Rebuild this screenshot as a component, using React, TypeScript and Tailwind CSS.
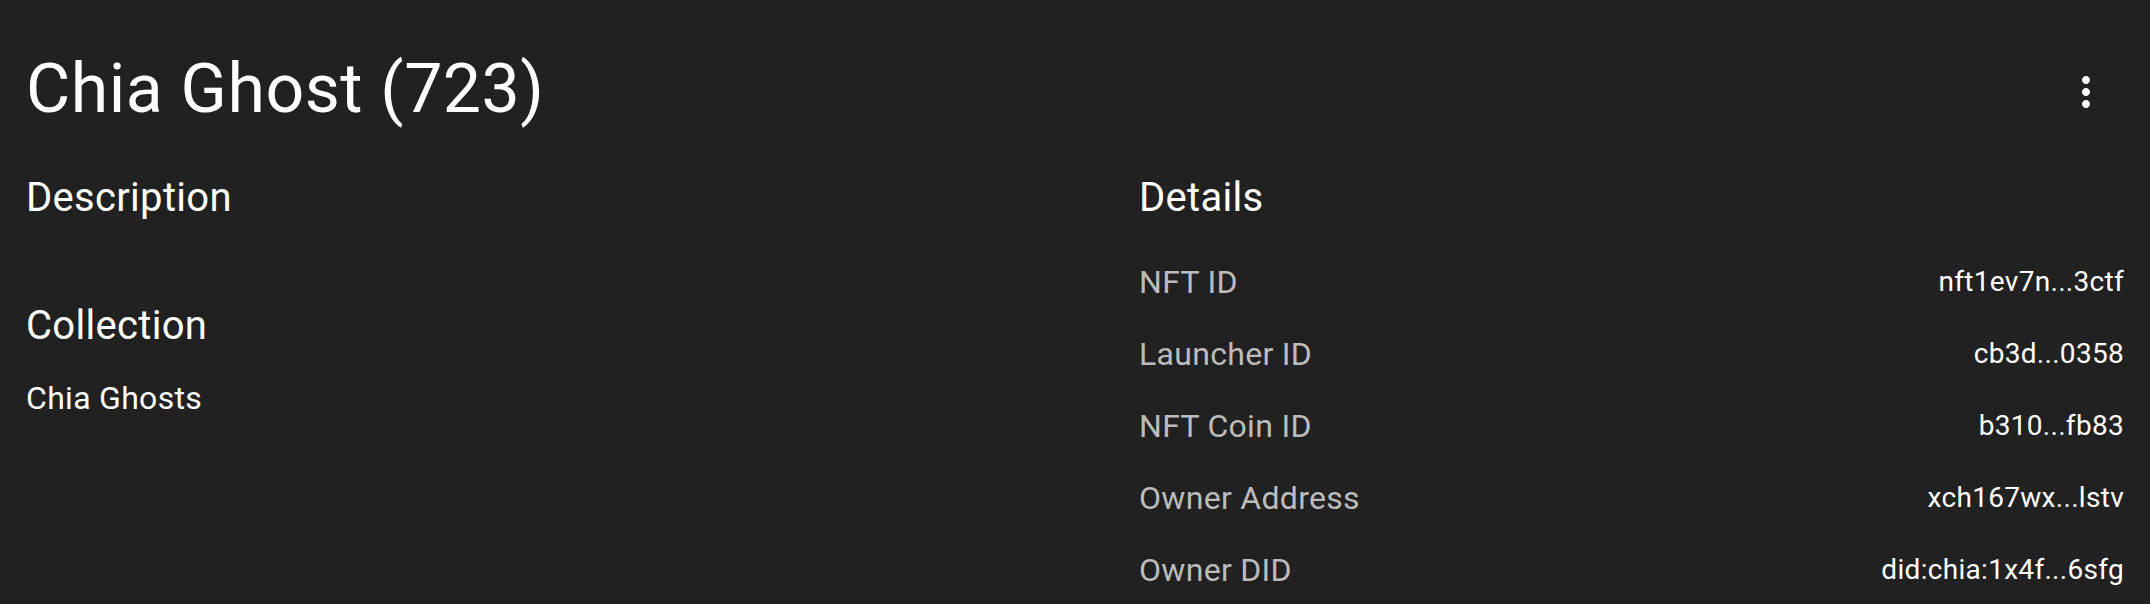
import React from 'react';

interface DetailRow {
  label: string;
  value: string;
}

const details: DetailRow[] = [
  { label: 'NFT ID', value: 'nft1ev7n...3ctf' },
  { label: 'Launcher ID', value: 'cb3d...0358' },
  { label: 'NFT Coin ID', value: 'b310...fb83' },
  { label: 'Owner Address', value: 'xch167wx...lstv' },
  { label: 'Owner DID', value: 'did:chia:1x4f...6sfg' },
];

const MoreVert = () => (
  <svg width="48" height="48" viewBox="0 0 24 24" fill="currentColor">
    <path d="M12 8c1.1 0 2-.9 2-2s-.9-2-2-2-2 .9-2 2 .9 2 2 2zm0 2c-1.1 0-2 .9-2 2s.9 2 2 2 2-.9 2-2-.9-2-2-2zm0 6c-1.1 0-2 .9-2 2s.9 2 2 2 2-.9 2-2-.9-2-2-2z" />
  </svg>
);

const App = () => {
  return (
    <div className="min-h-screen bg-[#212121] text-white px-[26px] pt-[49px] font-['Roboto',sans-serif]">
      <div className="flex items-start justify-between">
        <h1 className="text-[68px] leading-[80px] font-normal tracking-[0.5px]">Chia Ghost (723)</h1>
        <button className="p-[14px] mt-[5px] text-white">
          <MoreVert />
        </button>
      </div>

      <div className="grid grid-cols-2 gap-x-32 mt-[44px]">
        <div>
          <h2 className="text-[40px] leading-[48px] tracking-[0.3px]">Description</h2>
          <h2 className="text-[40px] leading-[48px] tracking-[0.3px] mt-[80px]">Collection</h2>
          <p className="text-[32px] leading-[48px] tracking-[0.3px] mt-6">Chia Ghosts</p>
        </div>

        <div>
          <h2 className="text-[40px] leading-[48px] tracking-[0.3px]">Details</h2>
          <div className="mt-9 flex flex-col gap-6">
            {details.map((row) => (
              <div key={row.label} className="flex items-center justify-between h-[48px]">
                <span className="text-[32px] leading-[48px] tracking-[0.3px] text-[#bcbcbc]">{row.label}</span>
                <span className="text-[28px] leading-[40px] tracking-[0.3px] text-white">{row.value}</span>
              </div>
            ))}
          </div>
        </div>
      </div>
    </div>
  );
};

export default App;
